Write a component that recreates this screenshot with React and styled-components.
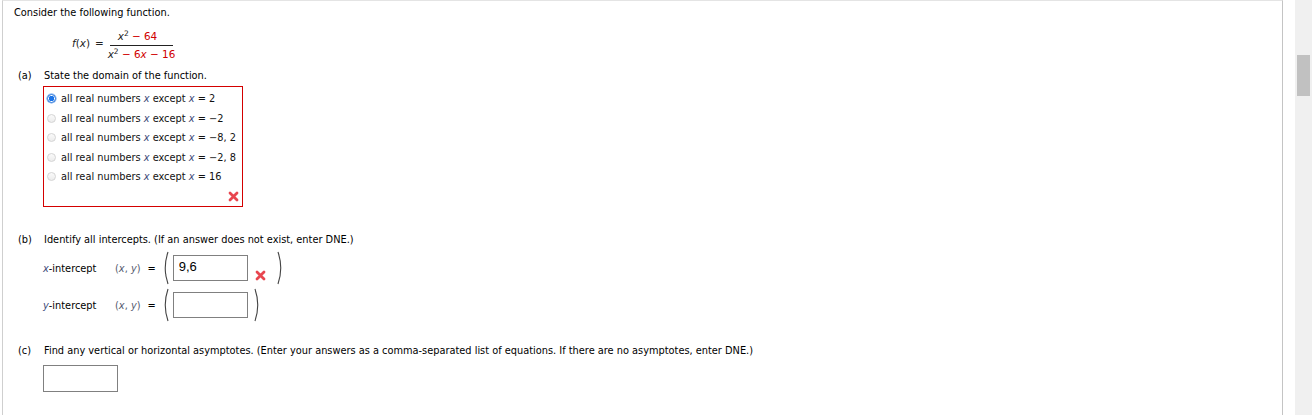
import React from 'react';
import styled, { createGlobalStyle } from 'styled-components';

const GlobalStyle = createGlobalStyle`
  html, body {
    margin: 0;
    padding: 0;
    background: #ffffff;
  }
  body {
    font-family: 'DejaVu Sans', Verdana, sans-serif;
    font-size: 9.8px;
    color: #000000;
  }
`;

const domainChoices = [
  { value: '2', checked: true },
  { value: '\u22122' },
  { value: '\u22128, 2' },
  { value: '\u22122, 8' },
  { value: '16' },
];

const WrongMark = ({ size = 11 }) => (
  <svg width={size} height={size} viewBox="0 0 11 11">
    <path
      d="M2 2 L9 9 M9 2 L2 9"
      stroke="#e8464f"
      strokeWidth="2.8"
      strokeLinecap="round"
      fill="none"
    />
  </svg>
);

const Paren = ({ right }) => (
  <ParenBox right={right}>
    <svg width="7" height="34" viewBox="0 0 7 34">
      <path
        d={right ? 'M1 1 Q6.5 17 1 33' : 'M6 1 Q0.5 17 6 33'}
        stroke="#444"
        strokeWidth="1.1"
        fill="none"
      />
    </svg>
  </ParenBox>
);

const PointAnswer = ({ value, wrong }) => (
  <PointRow>
    <Label>
      <MathVar>{value === undefined ? 'y' : 'x'}</MathVar>-intercept
    </Label>
    <Coord>
      (<MathVar gray>x</MathVar>, <MathVar gray>y</MathVar>)
    </Coord>
    <Equals>=</Equals>
    <Paren />
    <AnswerInput defaultValue={value || ''} />
    {wrong && (
      <PointMark>
        <WrongMark />
      </PointMark>
    )}
    <Paren right />
  </PointRow>
);

const App = () => {
  return (
    <>
      <GlobalStyle />
      <Page>
        <Panel>
          <Intro>Consider the following function.</Intro>
          <Formula>
            <FuncName>
              <MathVar plain>f</MathVar>(<MathVar plain>x</MathVar>)
            </FuncName>
            <FormulaEq>=</FormulaEq>
            <Fraction>
              <Numer>
                <MathVar plain>x</MathVar>
                <sup>2</sup> <Red>{'\u2212'} 64</Red>
              </Numer>
              <Denom>
                <MathVar plain>x</MathVar>
                <sup>2</sup> <Red>{'\u2212'} 6<i>x</i> {'\u2212'} 16</Red>
              </Denom>
            </Fraction>
          </Formula>

          <Part top="7px">
            <PartTag>(a)</PartTag>
            <span>State the domain of the function.</span>
          </Part>
          <ChoiceBox>
            {domainChoices.map((c) => (
              <Choice key={c.value}>
                <Radio checked={c.checked} />
                <span>
                  all real numbers <MathVar>x</MathVar> except{' '}
                  <MathVar>x</MathVar> = {c.value}
                </span>
              </Choice>
            ))}
            <BoxMark>
              <WrongMark />
            </BoxMark>
          </ChoiceBox>

          <Part top="25px">
            <PartTag>(b)</PartTag>
            <span>
              Identify all intercepts. (If an answer does not exist, enter
              DNE.)
            </span>
          </Part>
          <PointAnswer value="9,6" wrong />
          <PointAnswer />

          <Part top="21px">
            <PartTag>(c)</PartTag>
            <span>
              Find any vertical or horizontal asymptotes. (Enter your answers
              as a comma-separated list of equations. If there are no
              asymptotes, enter DNE.)
            </span>
          </Part>
          <PlainInput />
        </Panel>
        <ScrollTrack>
          <ScrollThumb />
        </ScrollTrack>
      </Page>
    </>
  );
};

export default App;

const Page = styled.div`
  display: flex;
  height: 415px;
  overflow: hidden;
`;

const Panel = styled.div`
  margin-left: 2px;
  width: 1268px;
  height: 415px;
  padding: 0 0 0 11px;
  border-left: 1px solid #cfcfcf;
  border-right: 1px solid #c4c4c4;
  border-top: 1px solid #e4e4e4;
  box-sizing: content-box;
`;

const ScrollTrack = styled.div`
  margin-left: auto;
  width: 17px;
  height: 415px;
  background: #f0f0f0;
  padding-top: 55px;
  box-sizing: border-box;
`;

const ScrollThumb = styled.div`
  width: 13px;
  height: 41px;
  margin-left: 2px;
  background: #c1c1c1;
`;

const Intro = styled.div`
  margin-top: 4px;
  line-height: 16px;
`;

const Formula = styled.div`
  display: flex;
  align-items: center;
  margin: 9px 0 0 58px;
  font-size: 10.4px;
  color: #222;
`;

const FuncName = styled.span`
  margin-bottom: 5px;
`;

const FormulaEq = styled.span`
  margin: 0 2px 5px 5px;
`;

const Fraction = styled.span`
  display: inline-flex;
  flex-direction: column;
  align-items: center;
  sup {
    font-size: 7.5px;
    vertical-align: 4px;
    line-height: 0;
  }
`;

const Numer = styled.span`
  padding: 0 16px 2px 8px;
  line-height: 13px;
  border-bottom: 1px solid #222;
`;

const Denom = styled.span`
  padding: 2px 2px 0 2px;
  line-height: 13px;
`;

const Red = styled.span`
  color: #d00000;
`;

const MathVar = styled.i`
  font-style: italic;
  color: ${(p) => (p.plain ? 'inherit' : p.gray ? '#555a6e' : '#3d4a78')};
`;

const Part = styled.div`
  display: flex;
  margin-top: ${(p) => p.top || '8px'};
  line-height: 16px;
  padding-left: 4px;
`;

const PartTag = styled.span`
  width: 26px;
  flex-shrink: 0;
`;

const ChoiceBox = styled.div`
  position: relative;
  width: 198px;
  height: 117px;
  margin: 2px 0 0 29px;
  border: 1px solid #d40000;
  padding-top: 2px;
  box-sizing: content-box;
`;

const Choice = styled.div`
  display: flex;
  align-items: center;
  height: 19.5px;
  padding-left: 3px;
  color: #111;
  white-space: nowrap;
`;

const Radio = styled.span`
  width: 9px;
  height: 9px;
  border-radius: 50%;
  margin-right: 5px;
  flex-shrink: 0;
  box-sizing: border-box;
  border: 1px solid ${(p) => (p.checked ? '#1f6fd6' : '#d4d4d4')};
  background: ${(p) =>
    p.checked
      ? 'radial-gradient(circle, #1a73e8 0 2.6px, #ffffff 3px)'
      : 'linear-gradient(#fafafa, #ececec)'};
  ${(p) => p.checked && 'box-shadow: 0 0 0 0.5px #5a9af0;'}
`;

const BoxMark = styled.span`
  position: absolute;
  right: 3px;
  bottom: 4px;
  display: flex;
`;

const PointRow = styled.div`
  display: flex;
  align-items: center;
  height: 34px;
  margin: 3px 0 0 29px;
`;

const Label = styled.span`
  width: 72px;
  flex-shrink: 0;
`;

const Coord = styled.span`
  color: #555a6e;
`;

const Equals = styled.span`
  margin: 0 4px 0 7px;
`;

const ParenBox = styled.span`
  display: flex;
  align-items: center;
  margin: ${(p) => (p.right ? '0 2px 0 6px' : '0 4px 0 2px')};
`;

const AnswerInput = styled.input`
  width: 75px;
  height: 26px;
  box-sizing: border-box;
  border: 1px solid #808080;
  padding: 0 5px 3px;
  font-family: 'Liberation Sans', Arial, sans-serif;
  font-size: 13px;
  color: #000;
  outline: none;
`;

const PointMark = styled.span`
  display: flex;
  align-self: flex-end;
  margin: 0 5px 4px 7px;
`;

const PlainInput = styled.input`
  display: block;
  width: 75px;
  height: 27px;
  box-sizing: border-box;
  margin: 6px 0 0 29px;
  border: 1px solid #808080;
  outline: none;
`;
